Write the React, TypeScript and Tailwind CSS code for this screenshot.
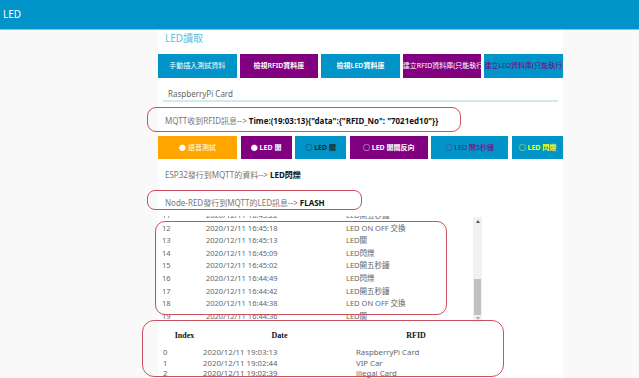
import React from "react";

const font = { fontFamily: '"Noto Sans", "Noto Sans CJK TC", sans-serif' };

const listRows = [
  ["11", "2020/12/11 16:45:22", "LED開五秒鐘"],
  ["12", "2020/12/11 16:45:18", "LED ON OFF 交換"],
  ["13", "2020/12/11 16:45:13", "LED關"],
  ["14", "2020/12/11 16:45:09", "LED閃爍"],
  ["15", "2020/12/11 16:45:02", "LED開五秒鐘"],
  ["16", "2020/12/11 16:44:49", "LED閃爍"],
  ["17", "2020/12/11 16:44:42", "LED開五秒鐘"],
  ["18", "2020/12/11 16:44:38", "LED ON OFF 交換"],
  ["19", "2020/12/11 16:44:36", "LED關"],
  ["20", "2020/12/11 16:44:30", "LED閃爍"],
];

const tableRows = [
  ["0", "2020/12/11 19:03:13", "RaspberryPi Card"],
  ["1", "2020/12/11 19:02:44", "VIP Car"],
  ["2", "2020/12/11 19:02:39", "illegal Card"],
];

export default function App() {
  return (
    <div
      className="relative w-[639px] h-[378px] overflow-hidden bg-[#f9f9f9]"
      style={font}
    >
      <div className="h-[30px] bg-[#0094c8] border-b border-[#7fc6e0] flex items-center pl-[3px] text-white text-[10px]">
        LED
      </div>
      <div className="flex">
        <div className="w-[158px] shrink-0" />
        <div className="w-[405px] shrink-0 bg-white h-[348px]">
          <div className="pl-[7px] h-[15px] leading-[15px] mt-[1px] text-[10px] text-[#5bc0de]">
            LED讀取
          </div>
          <div className="mt-[8px] grid grid-cols-5 gap-[3px] h-[24px] text-[7px] text-white">
            <div className="bg-[#0094c8] leading-[24px] text-center overflow-hidden whitespace-nowrap">手動插入測試資料</div>
            <div className="bg-[#800080] leading-[24px] text-center overflow-hidden whitespace-nowrap font-semibold">檢視RFID資料庫</div>
            <div className="bg-[#0094c8] leading-[24px] text-center overflow-hidden whitespace-nowrap font-semibold">檢視LED資料庫</div>
            <div className="bg-[#800080] leading-[24px] text-center overflow-hidden whitespace-nowrap">建立RFID資料庫(只能執行一次)</div>
            <div className="bg-[#0094c8] leading-[24px] text-center overflow-hidden whitespace-nowrap text-[#800080]">建立LED資料庫(只能執行一次)</div>
          </div>
          <div className="mt-[9px] mx-[5px] border-b-2 border-[#d2eaea] h-[15px] leading-[13px] pl-[5px] text-[8px] text-[#666]">
            RaspberryPi Card
          </div>
          <div className="mt-[13px] pl-[7px] h-[12px] leading-[12px] text-[8px] text-[#777] whitespace-nowrap">
            MQTT收到RFID訊息--&gt;{" "}
            <span className="font-bold text-[#111]">
              Time:(19:03:13){'{"data":{"RFID_No": "7021ed10"}}'}
            </span>
          </div>
          <div className="mt-[9px] flex gap-[3.6px] h-[23px] text-[7px] leading-[23px] text-center whitespace-nowrap">
            <div className="w-[79px] bg-[#ffa500] text-white">● 語音測試</div>
            <div className="w-[51px] bg-[#800080] text-white font-bold">● LED 開</div>
            <div className="w-[51px] bg-[#0094c8] text-[#222] font-bold">○ LED 關</div>
            <div className="w-[78px] bg-[#800080] text-white font-bold">○ LED 開關反向</div>
            <div className="w-[77px] bg-[#0094c8] text-[#800080]">○ LED 開5秒鐘</div>
            <div className="w-[51px] bg-[#0094c8] text-[#ffff00] font-bold">○ LED 閃爍</div>
          </div>
          <div className="mt-[10px] pl-[7px] h-[12px] leading-[12px] text-[8px] text-[#777] whitespace-nowrap">
            ESP32發行到MQTT的資料--&gt; <span className="font-bold text-[#111]">LED閃爍</span>
          </div>
          <div className="mt-[16px] pl-[7px] h-[12px] leading-[12px] text-[8px] text-[#777] whitespace-nowrap">
            Node-RED發行到MQTT的LED訊息--&gt; <span className="font-bold text-[#111]">FLASH</span>
          </div>
          <div className="mt-[7px] flex h-[106px]">
            <div className="w-[315px] overflow-hidden">
              <div className="mt-[-7px]">
                {listRows.map((r) => (
                  <div key={r[0]} className="flex h-[12.6px] leading-[12.6px] text-[7.5px] text-[#666] whitespace-nowrap">
                    <div className="w-[48px] pl-[4px]">{r[0]}</div>
                    <div className="w-[140px]">{r[1]}</div>
                    <div>{r[2]}</div>
                  </div>
                ))}
              </div>
            </div>
            <div className="w-[9px] mt-[1px] bg-[#f1f1f1] flex flex-col items-center">
              <div className="h-[8px] flex items-center justify-center">
                <div className="w-0 h-0 border-l-[2px] border-r-[2px] border-b-[3px] border-l-transparent border-r-transparent border-b-[#555]" />
              </div>
              <div className="flex-1 w-full relative">
                <div className="absolute left-[1px] right-[1px] top-[54px] h-[36px] bg-[#c1c1c1]" />
              </div>
              <div className="h-[8px] flex items-center justify-center">
                <div className="w-0 h-0 border-l-[2px] border-r-[2px] border-t-[3px] border-l-transparent border-r-transparent border-t-[#aaa]" />
              </div>
            </div>
          </div>
          <div className="mt-[7px]" style={{ fontFamily: '"Liberation Serif", serif' }}>
            <div className="flex h-[14px] leading-[14px] text-[8px] font-bold text-[#111]">
              <div className="w-[45px] text-center pl-[8px]">Index</div>
              <div className="w-[153px] text-center">Date</div>
              <div className="w-[120px] text-center">RFID</div>
            </div>
          </div>
          <div className="mt-[4px]">
            {tableRows.map((r) => (
              <div key={r[0]} className="flex h-[10.5px] leading-[10.5px] text-[7.8px] text-[#666] whitespace-nowrap">
                <div className="w-[45px] pl-[5px]">{r[0]}</div>
                <div className="w-[153px]">{r[1]}</div>
                <div>{r[2]}</div>
              </div>
            ))}
          </div>
        </div>
        <div className="flex-1" />
      </div>

      {/* annotation outlines */}
      <div className="absolute left-[147px] top-[107px] w-[314px] h-[25px] rounded-[9px] border border-[#c9515b] pointer-events-none" />
      <div className="absolute left-[147px] top-[190px] w-[215px] h-[20px] rounded-[8px] border border-[#c9515b] pointer-events-none" />
      <div className="absolute left-[155px] top-[221px] w-[292px] h-[94px] rounded-[10px] border border-[#c9515b] pointer-events-none" />
      <div className="absolute left-[142px] top-[320px] w-[362px] h-[57px] rounded-[12px] border border-[#c9515b] pointer-events-none" />
    </div>
  );
}
